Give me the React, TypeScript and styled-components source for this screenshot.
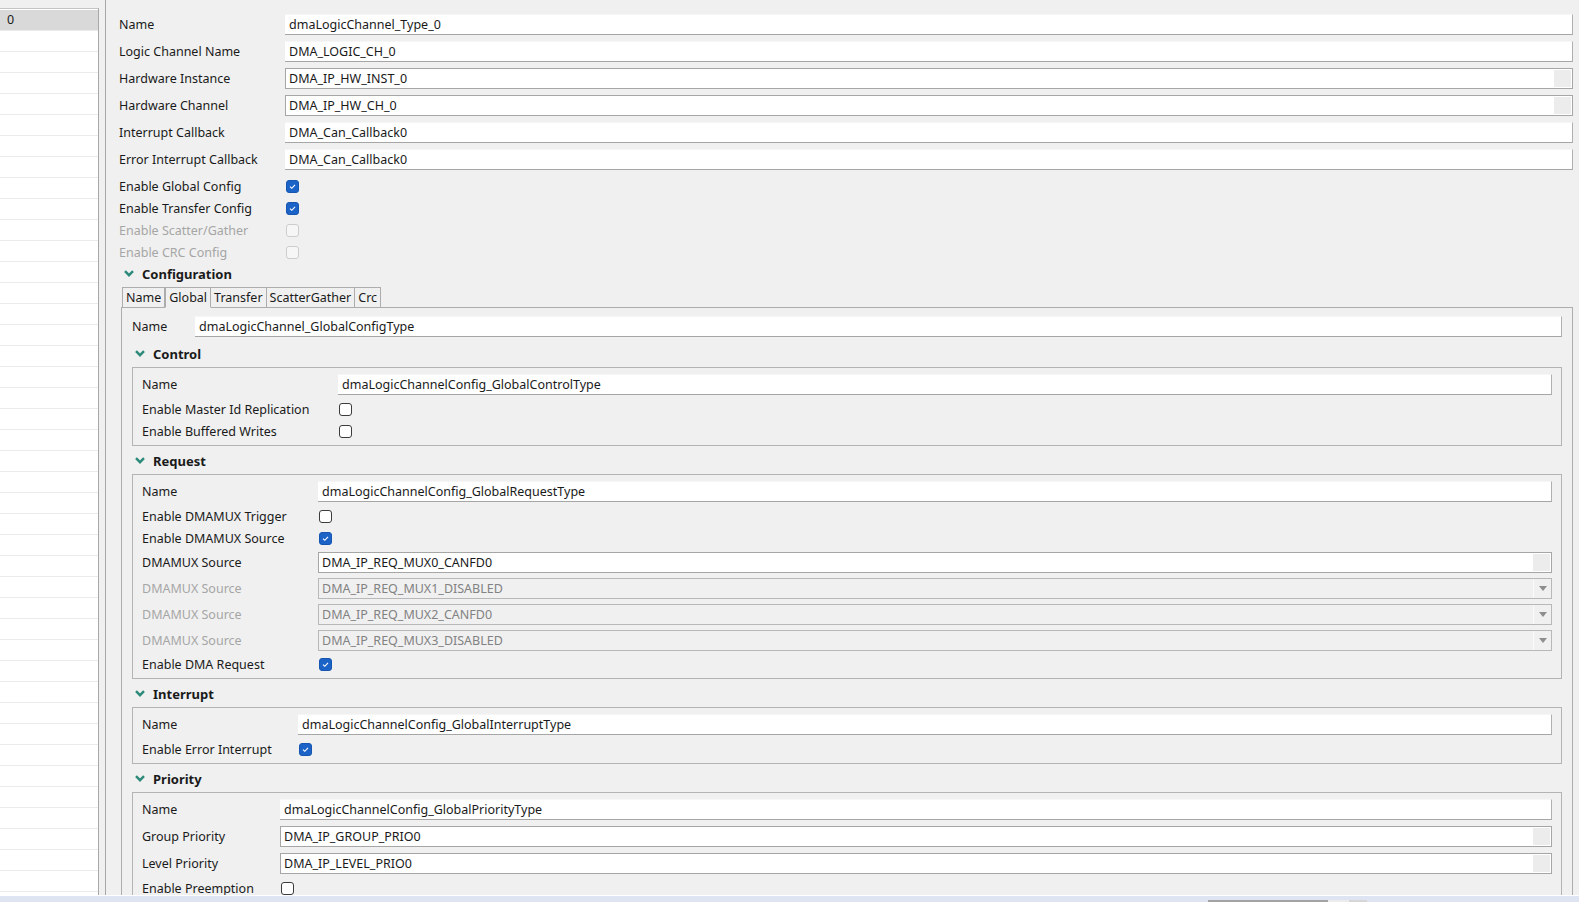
import React from "react";
import styled, { createGlobalStyle } from "styled-components";

const GlobalStyle = createGlobalStyle`
  html, body {
    margin: 0;
    padding: 0;
  }
  body {
    background: #f0f0f0;
    font-family: "Noto Sans", "Open Sans", sans-serif;
    font-size: 12.5px;
    color: #1a1a1a;
    overflow: hidden;
  }
`;

const Window = styled.div`
  width: 1579px;
  height: 902px;
  display: flex;
  flex-direction: column;
  overflow: hidden;
`;

const Body = styled.div`
  flex: 1;
  display: flex;
  min-height: 0;
`;

const ListPane = styled.div`
  width: 98px;
  margin-top: 8px;
  padding-top: 1px;
  background: #fff;
  border-top: 1px solid #c4c4c4;
  border-right: 1px solid #a8a8a8;
  overflow: hidden;
`;

const ListRow = styled.div<{ $selected?: boolean }>`
  height: 20px;
  line-height: 20px;
  padding-left: 7px;
  border-bottom: 1px solid #ebebeb;
  background: ${(p) => (p.$selected ? "#d9d9d9" : "#fff")};
`;

const Splitter = styled.div`
  width: 6px;
`;

const MainPane = styled.div`
  flex: 1;
  border-left: 1px solid #a8a8a8;
  padding: 11px 6px 0 13px;
  overflow: hidden;
`;

const Row = styled.div<{ $labelWidth: number; $h?: number }>`
  display: grid;
  grid-template-columns: ${(p) => p.$labelWidth}px 1fr;
  align-items: center;
  height: ${(p) => p.$h ?? 27}px;
`;

const Label = styled.span<{ $disabled?: boolean }>`
  white-space: nowrap;
  color: ${(p) => (p.$disabled ? "#a6a6a6" : "#1a1a1a")};
`;

const FlatInput = styled.div`
  height: 21px;
  box-sizing: border-box;
  padding-left: 4px;
  line-height: 20px;
  background: #fff;
  border-top: 1px solid #f6f6f6;
  border-right: 1px solid #b0b0b0;
  border-bottom: 1px solid #a6a6a6;
  white-space: nowrap;
  overflow: hidden;
`;

const Combo = styled.div<{ $disabled?: boolean }>`
  height: 21px;
  box-sizing: border-box;
  display: flex;
  border: 1px solid ${(p) => (p.$disabled ? "#b8b8b8" : "#a6a6a6")};
  background: ${(p) => (p.$disabled ? "#f0f0f0" : "#fff")};
  color: ${(p) => (p.$disabled ? "#828282" : "#1a1a1a")};
`;

const ComboText = styled.span`
  flex: 1;
  padding-left: 3px;
  line-height: 19px;
  white-space: nowrap;
  overflow: hidden;
`;

const ComboButton = styled.span<{ $disabled?: boolean }>`
  width: 17px;
  margin: ${(p) => (p.$disabled ? "0" : "1px 1px 1px 0")};
  display: flex;
  align-items: center;
  justify-content: center;
  background: ${(p) => (p.$disabled ? "#f0f0f0" : "#ececec")};
  border-left: ${(p) => (p.$disabled ? "1px solid #fbfbfb" : "none")};
`;

const CheckCell = styled.div`
  display: flex;
  align-items: center;
  height: 100%;
`;

const Box = styled.span<{ $checked?: boolean; $disabled?: boolean }>`
  width: 13px;
  height: 13px;
  box-sizing: border-box;
  border-radius: 3px;
  margin-left: 1px;
  display: inline-flex;
  align-items: center;
  justify-content: center;
  border: 1px solid
    ${(p) => (p.$checked ? "#1656b0" : p.$disabled ? "#cdcdcd" : "#3c3c3c")};
  background: ${(p) => (p.$checked ? "#1c63c7" : p.$disabled ? "#f6f6f6" : "#fff")};
`;

const CheckGroup = styled.div`
  margin-top: 2px;
`;

const SectionHeader = styled.div<{ $h?: number }>`
  display: flex;
  align-items: center;
  gap: 8px;
  height: ${(p) => p.$h ?? 27}px;
  padding-left: 3px;
  font-weight: 700;
  font-size: 13px;
`;

const ConfigSection = styled.div`
  margin-left: 2px;
`;

const TabStrip = styled.div`
  display: flex;
  height: 21px;
  margin-top: 3px;
  padding-left: 1px;
`;

const Tab = styled.div<{ $active?: boolean }>`
  position: relative;
  z-index: ${(p) => (p.$active ? 1 : 0)};
  padding: 0 3px;
  line-height: 19px;
  border: 1px solid #adadad;
  border-left-width: ${(p) => (p.$active ? 1 : 0)}px;
  border-bottom-color: ${(p) => (p.$active ? "#f0f0f0" : "#adadad")};
  background: #f0f0f0;
  &:first-child {
    border-left-width: 1px;
  }
`;

const TabPanel = styled.div`
  margin-top: -1px;
  border: 1px solid #adadad;
  border-bottom: none;
  padding: 5px 10px 0 10px;
`;

const GroupBox = styled.div`
  border: 1px solid #b4b4b4;
  padding: 3px 9px;
  margin-bottom: 1px;
`;

const BottomBar = styled.div`
  height: 6px;
  border-top: 1px solid #fff;
  background: #dfe4f3;
  display: flex;
  align-items: flex-end;
`;

const Thumb = styled.div<{ $w: number; $c: string; $ml?: number }>`
  width: ${(p) => p.$w}px;
  height: 2px;
  margin-left: ${(p) => p.$ml ?? 0}px;
  background: ${(p) => p.$c};
`;

type Item =
  | { kind: "text"; label: string; value: string }
  | { kind: "combo"; label: string; value: string; disabled?: boolean; h?: number }
  | { kind: "check"; label: string; checked?: boolean; disabled?: boolean };

const Chevron = () => (
  <svg width="10" height="7" viewBox="0 0 10 7">
    <polyline points="1,1.2 5,5.2 9,1.2" fill="none" stroke="#2b8a79" strokeWidth="2.4" />
  </svg>
);

const CheckBox = ({ checked, disabled }: { checked?: boolean; disabled?: boolean }) => (
  <Box $checked={checked} $disabled={disabled}>
    {checked && (
      <svg width="9" height="9" viewBox="0 0 9 9">
        <polyline points="2,4.6 3.8,6.3 7,2.8" fill="none" stroke="#fff" strokeWidth="1.1" />
      </svg>
    )}
  </Box>
);

const Arrow = () => (
  <svg width="8" height="5" viewBox="0 0 8 5">
    <polygon points="0,0 8,0 4,5" fill="#8e8e8e" />
  </svg>
);

const Field = ({ item, labelWidth }: { item: Item; labelWidth: number }) => {
  if (item.kind === "check") {
    return (
      <Row $labelWidth={labelWidth} $h={22}>
        <Label $disabled={item.disabled}>{item.label}</Label>
        <CheckCell>
          <CheckBox checked={item.checked} disabled={item.disabled} />
        </CheckCell>
      </Row>
    );
  }
  if (item.kind === "combo") {
    return (
      <Row $labelWidth={labelWidth} $h={item.h}>
        <Label $disabled={item.disabled}>{item.label}</Label>
        <Combo $disabled={item.disabled}>
          <ComboText>{item.value}</ComboText>
          <ComboButton $disabled={item.disabled}>{item.disabled && <Arrow />}</ComboButton>
        </Combo>
      </Row>
    );
  }
  return (
    <Row $labelWidth={labelWidth}>
      <Label>{item.label}</Label>
      <FlatInput>{item.value}</FlatInput>
    </Row>
  );
};

const topFields: Item[] = [
  { kind: "text", label: "Name", value: "dmaLogicChannel_Type_0" },
  { kind: "text", label: "Logic Channel Name", value: "DMA_LOGIC_CH_0" },
  { kind: "combo", label: "Hardware Instance", value: "DMA_IP_HW_INST_0" },
  { kind: "combo", label: "Hardware Channel", value: "DMA_IP_HW_CH_0" },
  { kind: "text", label: "Interrupt Callback", value: "DMA_Can_Callback0" },
  { kind: "text", label: "Error Interrupt Callback", value: "DMA_Can_Callback0" },
];

const topChecks: Item[] = [
  { kind: "check", label: "Enable Global Config", checked: true },
  { kind: "check", label: "Enable Transfer Config", checked: true },
  { kind: "check", label: "Enable Scatter/Gather", disabled: true },
  { kind: "check", label: "Enable CRC Config", disabled: true },
];

const groups: { title: string; labelWidth: number; items: Item[] }[] = [
  {
    title: "Control",
    labelWidth: 196,
    items: [
      { kind: "text", label: "Name", value: "dmaLogicChannelConfig_GlobalControlType" },
      { kind: "check", label: "Enable Master Id Replication" },
      { kind: "check", label: "Enable Buffered Writes" },
    ],
  },
  {
    title: "Request",
    labelWidth: 176,
    items: [
      { kind: "text", label: "Name", value: "dmaLogicChannelConfig_GlobalRequestType" },
      { kind: "check", label: "Enable DMAMUX Trigger" },
      { kind: "check", label: "Enable DMAMUX Source", checked: true },
      { kind: "combo", label: "DMAMUX Source", value: "DMA_IP_REQ_MUX0_CANFD0", h: 26 },
      { kind: "combo", label: "DMAMUX Source", value: "DMA_IP_REQ_MUX1_DISABLED", disabled: true, h: 26 },
      { kind: "combo", label: "DMAMUX Source", value: "DMA_IP_REQ_MUX2_CANFD0", disabled: true, h: 26 },
      { kind: "combo", label: "DMAMUX Source", value: "DMA_IP_REQ_MUX3_DISABLED", disabled: true, h: 26 },
      { kind: "check", label: "Enable DMA Request", checked: true },
    ],
  },
  {
    title: "Interrupt",
    labelWidth: 156,
    items: [
      { kind: "text", label: "Name", value: "dmaLogicChannelConfig_GlobalInterruptType" },
      { kind: "check", label: "Enable Error Interrupt", checked: true },
    ],
  },
  {
    title: "Priority",
    labelWidth: 138,
    items: [
      { kind: "text", label: "Name", value: "dmaLogicChannelConfig_GlobalPriorityType" },
      { kind: "combo", label: "Group Priority", value: "DMA_IP_GROUP_PRIO0" },
      { kind: "combo", label: "Level Priority", value: "DMA_IP_LEVEL_PRIO0" },
      { kind: "check", label: "Enable Preemption" },
    ],
  },
];

const tabs = ["Name", "Global", "Transfer", "ScatterGather", "Crc"];

const App = () => {
  return (
    <Window>
      <GlobalStyle />
      <Body>
        <ListPane>
          {Array.from({ length: 44 }).map((_, i) => (
            <ListRow key={i} $selected={i === 0}>
              {i === 0 ? "0" : ""}
            </ListRow>
          ))}
        </ListPane>
        <Splitter />
        <MainPane>
          {topFields.map((f, i) => (
            <Field key={i} item={f} labelWidth={166} />
          ))}
          <CheckGroup>
            {topChecks.map((f, i) => (
              <Field key={i} item={f} labelWidth={166} />
            ))}
          </CheckGroup>
          <ConfigSection>
            <SectionHeader $h={21}>
              <Chevron />
              Configuration
            </SectionHeader>
            <TabStrip>
              {tabs.map((t) => (
                <Tab key={t} $active={t === "Global"}>
                  {t}
                </Tab>
              ))}
            </TabStrip>
            <TabPanel>
              <Field
                item={{ kind: "text", label: "Name", value: "dmaLogicChannel_GlobalConfigType" }}
                labelWidth={63}
              />
              {groups.map((g) => (
                <div key={g.title}>
                  <SectionHeader>
                    <Chevron />
                    {g.title}
                  </SectionHeader>
                  <GroupBox>
                    {g.items.map((f, i) => (
                      <Field key={i} item={f} labelWidth={g.labelWidth} />
                    ))}
                  </GroupBox>
                </div>
              ))}
            </TabPanel>
          </ConfigSection>
        </MainPane>
      </Body>
      <BottomBar>
        <Thumb $w={120} $c="#a3a3a3" $ml={1208} />
        <Thumb $w={21} $c="#ececec" />
        <Thumb $w={18} $c="#d6d6d6" />
      </BottomBar>
    </Window>
  );
};

export default App;
